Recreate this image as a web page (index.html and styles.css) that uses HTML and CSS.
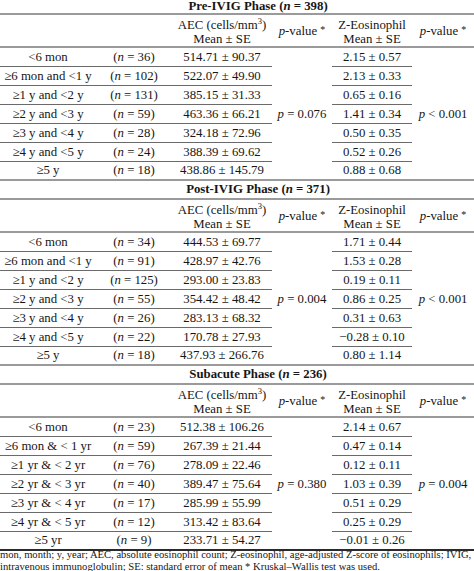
FILE: index.html
```html
<!DOCTYPE html>
<html>
<head>
<meta charset="utf-8">
<link rel="stylesheet" href="styles.css">
</head>
<body>
<table class="tbl">
  <colgroup>
    <col class="c1"><col class="c2"><col class="c3"><col class="c4"><col class="c5"><col class="c6">
  </colgroup>
  <tbody class="first">
    <tr class="title"><td colspan="6">Pre-IVIG Phase (<i>n</i> = 398)</td></tr>
    <tr class="head"><td></td><td></td><td>AEC (cells/mm<sup>3</sup>)<br>Mean ± SE</td><td class="pv"><i>p</i>-value <span class="ast">*</span></td><td>Z-Eosinophil<br>Mean ± SE</td><td class="pv"><i>p</i>-value <span class="ast">*</span></td></tr>
    <tr><td>&lt;6 mon</td><td>(<i>n</i> = 36)</td><td>514.71 ± 90.37</td><td class="span" rowspan="7"><i>p</i> = 0.076</td><td>2.15 ± 0.57</td><td class="span" rowspan="7"><i>p</i> &lt; 0.001</td></tr>
    <tr><td>≥6 mon and &lt;1 y</td><td>(<i>n</i> = 102)</td><td>522.07 ± 49.90</td><td>2.13 ± 0.33</td></tr>
    <tr><td>≥1 y and &lt;2 y</td><td>(<i>n</i> = 131)</td><td>385.15 ± 31.33</td><td>0.65 ± 0.16</td></tr>
    <tr><td>≥2 y and &lt;3 y</td><td>(<i>n</i> = 59)</td><td>463.36 ± 66.21</td><td>1.41 ± 0.34</td></tr>
    <tr><td>≥3 y and &lt;4 y</td><td>(<i>n</i> = 28)</td><td>324.18 ± 72.96</td><td>0.50 ± 0.35</td></tr>
    <tr><td>≥4 y and &lt;5 y</td><td>(<i>n</i> = 24)</td><td>388.39 ± 69.62</td><td>0.52 ± 0.26</td></tr>
    <tr class="last"><td>≥5 y</td><td>(<i>n</i> = 18)</td><td>438.86 ± 145.79</td><td>0.88 ± 0.68</td></tr>
  </tbody>
  <tbody>
    <tr class="title"><td colspan="6">Post-IVIG Phase (<i>n</i> = 371)</td></tr>
    <tr class="head"><td></td><td></td><td>AEC (cells/mm<sup>3</sup>)<br>Mean ± SE</td><td class="pv"><i>p</i>-value <span class="ast">*</span></td><td>Z-Eosinophil<br>Mean ± SE</td><td class="pv"><i>p</i>-value <span class="ast">*</span></td></tr>
    <tr><td>&lt;6 mon</td><td>(<i>n</i> = 34)</td><td>444.53 ± 69.77</td><td class="span" rowspan="7"><i>p</i> = 0.004</td><td>1.71 ± 0.44</td><td class="span" rowspan="7"><i>p</i> &lt; 0.001</td></tr>
    <tr><td>≥6 mon and &lt;1 y</td><td>(<i>n</i> = 91)</td><td>428.97 ± 42.76</td><td>1.53 ± 0.28</td></tr>
    <tr><td>≥1 y and &lt;2 y</td><td>(<i>n</i> = 125)</td><td>293.00 ± 23.83</td><td>0.19 ± 0.11</td></tr>
    <tr><td>≥2 y and &lt;3 y</td><td>(<i>n</i> = 55)</td><td>354.42 ± 48.42</td><td>0.86 ± 0.25</td></tr>
    <tr><td>≥3 y and &lt;4 y</td><td>(<i>n</i> = 26)</td><td>283.13 ± 68.32</td><td>0.31 ± 0.63</td></tr>
    <tr><td>≥4 y and &lt;5 y</td><td>(<i>n</i> = 22)</td><td>170.78 ± 27.93</td><td>−0.28 ± 0.10</td></tr>
    <tr class="last"><td>≥5 y</td><td>(<i>n</i> = 18)</td><td>437.93 ± 266.76</td><td>0.80 ± 1.14</td></tr>
  </tbody>
  <tbody class="final">
    <tr class="title"><td colspan="6">Subacute Phase (<i>n</i> = 236)</td></tr>
    <tr class="head"><td></td><td></td><td>AEC (cells/mm<sup>3</sup>)<br>Mean ± SE</td><td class="pv"><i>p</i>-value <span class="ast">*</span></td><td>Z-Eosinophil<br>Mean ± SE</td><td class="pv"><i>p</i>-value <span class="ast">*</span></td></tr>
    <tr><td>&lt;6 mon</td><td>(<i>n</i> = 23)</td><td>512.38 ± 106.26</td><td class="span" rowspan="7"><i>p</i> = 0.380</td><td>2.14 ± 0.67</td><td class="span" rowspan="7"><i>p</i> = 0.004</td></tr>
    <tr><td>≥6 mon &amp; &lt; 1 yr</td><td>(<i>n</i> = 59)</td><td>267.39 ± 21.44</td><td>0.47 ± 0.14</td></tr>
    <tr><td>≥1 yr &amp; &lt; 2 yr</td><td>(<i>n</i> = 76)</td><td>278.09 ± 22.46</td><td>0.12 ± 0.11</td></tr>
    <tr><td>≥2 yr &amp; &lt; 3 yr</td><td>(<i>n</i> = 40)</td><td>389.47 ± 75.64</td><td>1.03 ± 0.39</td></tr>
    <tr><td>≥3 yr &amp; &lt; 4 yr</td><td>(<i>n</i> = 17)</td><td>285.99 ± 55.99</td><td>0.51 ± 0.29</td></tr>
    <tr><td>≥4 yr &amp; &lt; 5 yr</td><td>(<i>n</i> = 12)</td><td>313.42 ± 83.64</td><td>0.25 ± 0.29</td></tr>
    <tr class="last"><td>≥5 yr</td><td>(<i>n</i> = 9)</td><td>233.71 ± 54.27</td><td>−0.01 ± 0.26</td></tr>
  </tbody>
</table>
<p class="note">mon, month; y, year; AEC, absolute eosinophil count; Z-eosinophil, age-adjusted Z-score of eosinophils; IVIG, intravenous immunoglobulin; SE: standard error of mean * Kruskal–Wallis test was used.</p>
</body>
</html>
```
FILE: styles.css
```css
html, body {
  margin: 0;
  padding: 0;
  background: #ffffff;
}
body {
  width: 474px;
  height: 571px;
  overflow: hidden;
  font-family: "Liberation Serif", "Times New Roman", serif;
  color: #161616;
}
.tbl {
  width: 474px;
  margin-top: 0;
  border-collapse: separate;
  border-spacing: 0;
  table-layout: fixed;
  font-size: 12.8px;
}
.c1 { width: 96px; }
.c2 { width: 76px; }
.c3 { width: 100px; }
.c4 { width: 60px; }
.c5 { width: 80px; }
.c6 { width: 62px; }
.tbl td {
  padding: 0;
  text-align: center;
  white-space: nowrap;
  line-height: 18px;
  border-bottom: 1px solid #6a6a6a;
}
.tbl tr.title td {
  font-weight: bold;
  line-height: 17px;
  padding-left: 42px;
  border-bottom: 2px solid #9a9a9a;
}
.tbl tbody.first tr.title td {
  padding-top: 0;
  line-height: 13px;
}
.tbl tr.head td {
  line-height: 14px;
  padding-top: 3px;
  vertical-align: middle;
  border-bottom: 2px solid #9a9a9a;
}
.tbl tr.head td.pv {
  padding-top: 0;
}
.tbl sup {
  font-size: 8.5px;
  line-height: 0;
  vertical-align: 5px;
}
.tbl .ast {
  font-size: 10px;
  line-height: 0;
  vertical-align: 2px;
}
.tbl td.span {
  vertical-align: middle;
  border-bottom: 2px solid #9a9a9a;
}
.tbl tr.last td {
  line-height: 17px;
  border-bottom: 2px solid #9a9a9a;
}
.tbl tbody.final tr.last td,
.tbl tbody.final td.span {
  border-bottom: 2px solid #2a2a2a;
}
.note {
  margin: -2px 0 0 0;
  font-size: 10.6px;
  line-height: 11.5px;
  color: #161616;
}
```
